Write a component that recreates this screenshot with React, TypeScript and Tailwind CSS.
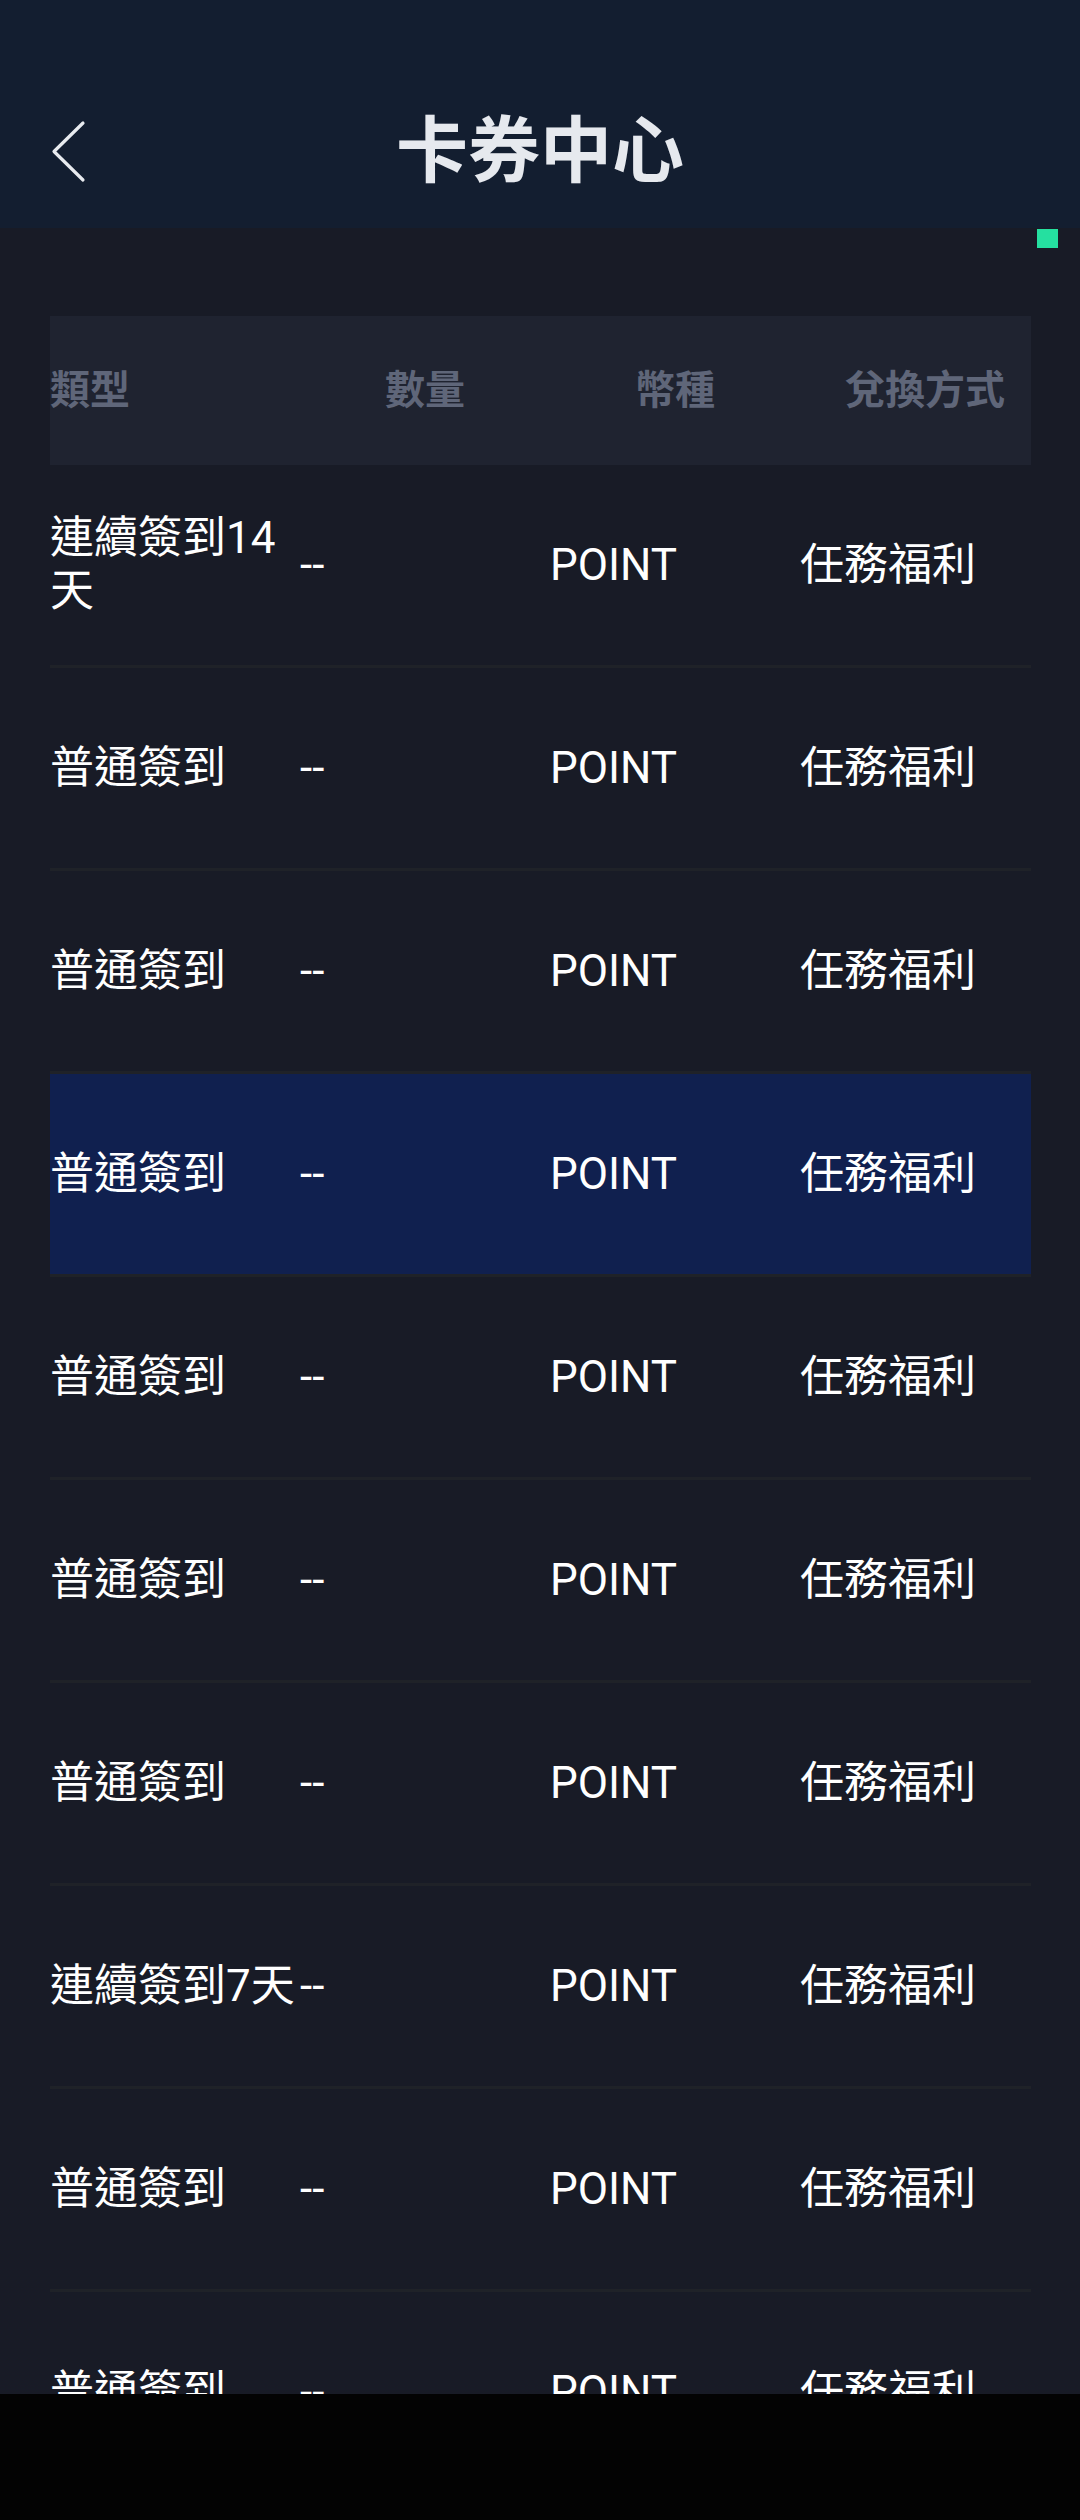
const rows = [
  "連續簽到14天",
  "普通簽到",
  "普通簽到",
  "普通簽到",
  "普通簽到",
  "普通簽到",
  "普通簽到",
  "連續簽到7天",
  "普通簽到",
  "普通簽到",
  "普通簽到",
];

const font = { fontFamily: "Roboto, 'Noto Sans CJK TC', sans-serif" };

export default function App() {
  return (
    <div
      className="w-[1080px] h-[2520px] flex flex-col bg-[#181b26] overflow-hidden"
      style={font}
    >
      <header className="h-[228px] shrink-0 bg-[#131e30] pt-[116px] px-[50px]">
        <div className="grid grid-cols-[1fr_auto_1fr] items-center h-[72px]">
          <button className="w-[40px] h-[64px] flex items-center">
            <svg width="36" height="64" viewBox="0 0 36 64" fill="none">
              <path
                d="M33 3 L4 31.5 L33 60"
                stroke="#e8ebef"
                strokeWidth="3.2"
                strokeLinecap="round"
                strokeLinejoin="round"
              />
            </svg>
          </button>
          <h1 className="text-[72px] leading-[72px] font-bold text-[#e6e9ee]">
            卡券中心
          </h1>
          <div />
        </div>
      </header>

      <main className="flex-1 relative overflow-hidden pt-[88px]">
        <div className="absolute top-[1px] right-[22px] w-[21px] h-[19px] bg-[#25e0a0]" />

        <div className="mx-[50px] w-[981px] overflow-hidden">
          <div className="w-[1000px]">
            <div className="grid grid-cols-[250px_250px_250px_250px] h-[149px] items-center bg-[#1f2330] text-[40px] font-bold text-[#5f6679]">
              <span>類型</span>
              <span className="text-center">數量</span>
              <span className="text-center">幣種</span>
              <span className="text-center">兌換方式</span>
            </div>

            {rows.map((type, i) => (
              <div
                key={i}
                className={`grid grid-cols-[250px_250px_250px_250px] h-[203px] items-center border-b-[3px] border-[#1f2228] text-[44px] leading-[53px] text-white ${
                  i === 3 ? "bg-[#10204f]" : ""
                }`}
              >
                <span>{type}</span>
                <span>--</span>
                <span>POINT</span>
                <span>任務福利</span>
              </div>
            ))}
          </div>
        </div>
      </main>

      <footer className="h-[126px] shrink-0 bg-[#030303]" />
    </div>
  );
}
